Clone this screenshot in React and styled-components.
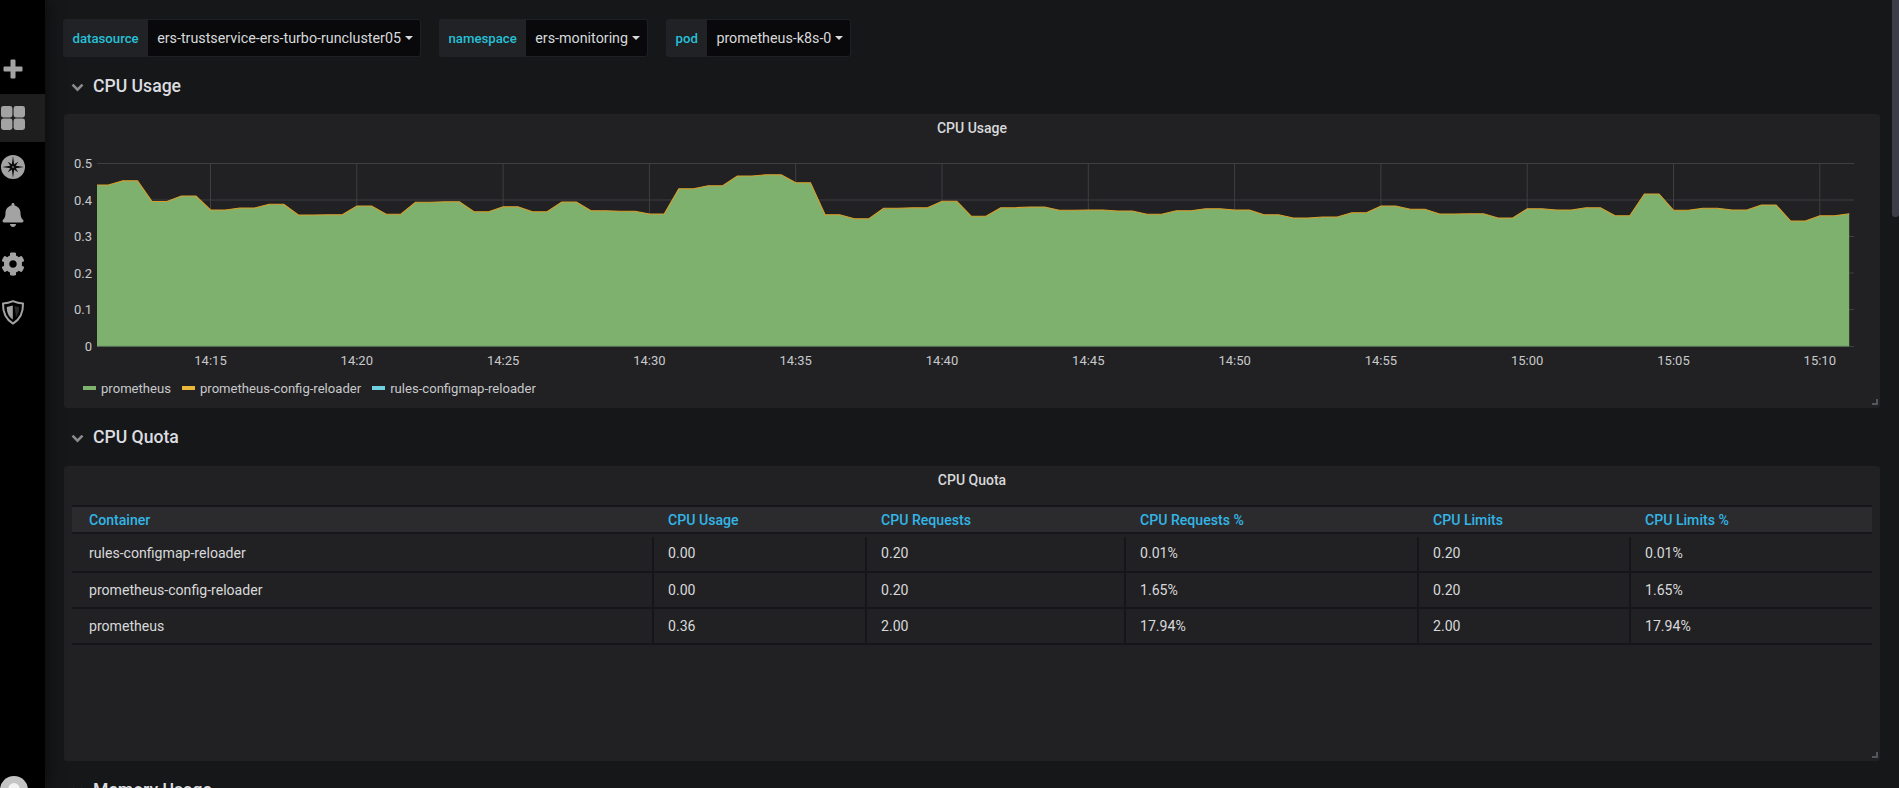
import React from 'react';
import styled, { createGlobalStyle } from 'styled-components';
import { FaBell, FaCog } from 'react-icons/fa';

const GlobalStyle = createGlobalStyle`
  html, body {
    margin: 0;
    height: 788px;
    overflow: hidden;
    background: #161719;
    font-family: Roboto, "Liberation Sans", sans-serif;
    color: #d8d9da;
  }
`;

const Page = styled.div`
  display: flex;
  height: 788px;
  overflow: hidden;
`;

const Sidebar = styled.nav`
  position: relative;
  z-index: 2;
  flex: 0 0 45px;
  display: flex;
  flex-direction: column;
  padding-top: 45px;
  box-sizing: border-box;
  background: #000;
  box-shadow: 0 0 18px rgba(0, 0, 0, 0.65);
  overflow: hidden;
`;

const SideItem = styled.div`
  flex: 0 0 48.7px;
  display: flex;
  align-items: center;
  justify-content: center;
  padding-right: 19px;
  box-sizing: border-box;
  color: #a3a3a3;
  background: ${(p) => (p.$active ? '#1e1e1f' : 'transparent')};
`;

const Avatar = styled.div`
  flex: 0 0 28px;
  width: 28px;
  margin-top: auto;
  margin-bottom: -16px;
  border-radius: 50%;
  background: #c4c4c4;
  display: flex;
  justify-content: center;
  padding-top: 7px;
  box-sizing: border-box;
  &::after {
    content: '';
    width: 12px;
    height: 14px;
    border-radius: 50%;
    background: #f2f2f2;
  }
`;

const Main = styled.main`
  flex: 1;
  min-width: 0;
  padding: 19px 19px 0;
`;

const VarRow = styled.div`
  display: flex;
  gap: 18px;
  margin-left: -1px;
`;

const VarGroup = styled.div`
  display: flex;
  height: 38px;
  font-size: 14.3px;
`;

const VarLabel = styled.div`
  display: flex;
  align-items: center;
  padding: 0 9.5px;
  background: #202226;
  color: #27c0d6;
  font-size: 13.2px;
  font-weight: 500;
  border-radius: 3px 0 0 3px;
`;

const VarSelect = styled.div`
  display: flex;
  align-items: center;
  gap: 4px;
  padding: 0 7px 0 9px;
  background: #09090b;
  border: 1px solid #1f2024;
  border-left: 0;
  border-radius: 0 3px 3px 0;
  color: #d8d9da;
`;

const Caret = styled.span`
  width: 0;
  height: 0;
  border-left: 4.5px solid transparent;
  border-right: 4.5px solid transparent;
  border-top: 4.5px solid #d8d9da;
`;

const SectionRow = styled.div`
  display: flex;
  align-items: center;
  gap: 9px;
  height: ${(p) => p.$height}px;
  padding-left: 7px;
  font-size: 17.6px;
  font-weight: 500;
  color: #dcdde0;
  svg {
    margin-top: 3px;
  }
`;

const Panel = styled.section`
  position: relative;
  height: ${(p) => p.$height}px;
  background: #212124;
  border-radius: 3px;
  &::after {
    content: '';
    position: absolute;
    right: 2px;
    bottom: 3px;
    width: 4px;
    height: 4px;
    border-right: 2px solid #55565a;
    border-bottom: 2px solid #55565a;
  }
`;

const PanelTitle = styled.h3`
  margin: 0;
  height: 28px;
  line-height: 28px;
  text-align: center;
  font-size: 14px;
  font-weight: 500;
  color: #d8d9da;
`;

const ChartSvg = styled.svg`
  display: block;
  width: 1816px;
  height: 230px;
`;

const AxisLabel = styled.text`
  font-size: 13px;
  fill: #c8c9ca;
`;

const Legend = styled.div`
  display: flex;
  gap: 11px;
  height: 32px;
  align-items: center;
  padding-left: 19px;
  font-size: 13.1px;
  color: #c8c9ca;
`;

const LegendItem = styled.div`
  display: flex;
  align-items: center;
  gap: 5px;
  &::before {
    content: '';
    width: 13px;
    height: 4px;
    background: ${(p) => p.$color};
  }
`;

const TableWrap = styled.div`
  margin: 11px 8px 0;
  font-size: 14.1px;
`;

const COLUMNS = '580px 213px 259px 293px 212px 243px';

const HeadRow = styled.div`
  display: grid;
  grid-template-columns: ${COLUMNS};
  height: 25px;
  align-items: center;
  background: #2b2b2e;
  border-top: 2px solid #141619;
  border-bottom: 2px solid #141619;
  margin-bottom: 3px;
`;

const HeadCell = styled.div`
  padding-left: ${(p) => (p.$first ? 17 : 16)}px;
  color: #33b5e5;
  font-weight: 500;
`;

const Row = styled.div`
  display: grid;
  grid-template-columns: ${COLUMNS};
  height: 36px;
  box-sizing: border-box;
  border-bottom: 2px solid #141619;
  &:nth-child(2) > div {
    padding-bottom: 2px;
  }
`;

const Cell = styled.div`
  display: flex;
  align-items: center;
  box-sizing: border-box;
  padding-left: ${(p) => (p.$first ? 17 : 14)}px;
  border-left: ${(p) => (p.$first ? 'none' : '2px solid #141619')};
  color: #d8d9da;
`;

const ScrollThumb = styled.div`
  position: fixed;
  top: 0;
  right: 0;
  width: 7px;
  height: 217px;
  background: #3c3d48;
  border-radius: 0 0 3px 3px;
`;

const PlusIcon = () => (
  <svg width="20" height="20" viewBox="0 0 20 20" fill="currentColor">
    <path d="M7.5 1.5a1 1 0 0 1 1-1h3a1 1 0 0 1 1 1v6h6a1 1 0 0 1 1 1v3a1 1 0 0 1-1 1h-6v6a1 1 0 0 1-1 1h-3a1 1 0 0 1-1-1v-6h-6a1 1 0 0 1-1-1v-3a1 1 0 0 1 1-1h6z" />
  </svg>
);

const DashIcon = () => (
  <svg width="24" height="24" viewBox="0 0 24 24" fill="currentColor">
    <rect x="0" y="0" width="11.4" height="11.4" rx="2.4" />
    <rect x="12.6" y="0" width="11.4" height="11.4" rx="2.4" />
    <rect x="0" y="12.6" width="11.4" height="11.4" rx="2.4" />
    <rect x="12.6" y="12.6" width="11.4" height="11.4" rx="2.4" />
  </svg>
);

// compass rose: long N/E/S/W tips, short diagonal tips, narrow waist between them
const starPoints = Array.from({ length: 16 }, (_, i) => {
  const radius = i % 4 === 0 ? 11 : i % 4 === 2 ? 7.4 : 3;
  const angle = (i * Math.PI) / 8 - Math.PI / 2;
  return `${(12 + radius * Math.cos(angle)).toFixed(2)},${(12 + radius * Math.sin(angle)).toFixed(2)}`;
}).join(' ');

const CompassIcon = () => (
  <svg width="24" height="24" viewBox="0 0 24 24">
    <circle cx="12" cy="12" r="12" fill="currentColor" />
    <polygon fill="#0c0c0c" points={starPoints} />
    <circle cx="12" cy="12" r="1.1" fill="#6a6a6a" />
  </svg>
);

const ShieldIcon = () => (
  <svg width="24" height="25" viewBox="0 0 24 25" fill="none">
    <path
      d="M12 1.2c3.2 1.4 6.6 2.2 10 2.4.2 8.6-2.6 15.8-10 20-7.4-4.2-10.2-11.4-10-20 3.4-.2 6.8-1 10-2.4z"
      stroke="currentColor"
      strokeWidth="2"
      strokeLinejoin="round"
    />
    <path d="M11.8 5.4v14.2C8 17 5.6 12.6 5.8 7z" fill="currentColor" />
    <path d="M13.4 6l4.8 1.2c0 4-1.2 7.6-3.2 10z" fill="#2a2a2a" />
  </svg>
);

const Chevron = () => (
  <svg width="13" height="9" viewBox="0 0 13 9" fill="none">
    <path d="M1.5 1.6l5 5 5-5" stroke="#8a8b8d" strokeWidth="2.6" />
  </svg>
);

// plateau heights read off the panel, in page px; each holds for two samples
const LEVELS = [
  185, 180.7, 201.5, 196, 210, 208, 204.3, 215, 214.7, 206, 214.3, 202.3, 201.8, 211.7, 206.7,
  211.7, 202, 210.7, 211.3, 214, 188.7, 185.7, 176, 174.7, 182.7, 214.7, 218.7, 208.3, 207.8,
  201.3, 216.3, 207.7, 207, 210.3, 210, 211, 214.3, 210.7, 208.7, 210, 214.7, 218, 217, 212.7,
  206, 209.3, 214, 213.8, 218, 208.7, 210, 207.7, 215.7, 194, 210.3, 208.3, 210, 205, 221, 215.7,
];

const STEP = 14.63;
const FIRST_X = 93.6;
const BASE_Y = 346;

const linePoints = [];
LEVELS.forEach((y, k) => {
  const x0 = FIRST_X + 2 * k * STEP;
  linePoints.push([Math.max(x0, 97), y]);
  linePoints.push([x0 + STEP, y]);
});
linePoints.push([FIRST_X + 120 * STEP, 213.7]);

const toPoints = (pts) => pts.map(([x, y]) => `${x.toFixed(1)},${y.toFixed(1)}`).join(' ');
const lastX = linePoints[linePoints.length - 1][0];

const yTicks = [
  ['0.5', 163],
  ['0.4', 199.5],
  ['0.3', 236],
  ['0.2', 272.5],
  ['0.1', 309],
  ['0', 346],
];

const xTicks = ['14:15', '14:20', '14:25', '14:30', '14:35', '14:40', '14:45', '14:50', '14:55', '15:00', '15:05', '15:10'];

const CpuChart = () => (
  <ChartSvg viewBox="64 142 1816 230">
    {yTicks.map(([label, y]) => (
      <g key={label}>
        <line x1="97" x2="1854" y1={y + 0.5} y2={y + 0.5} stroke="#3f3f42" />
        <AxisLabel x="92" y={y + 5} textAnchor="end">
          {label}
        </AxisLabel>
      </g>
    ))}
    {xTicks.map((label, i) => {
      const x = 210.5 + i * 146.3;
      return (
        <g key={label}>
          <line x1={x} x2={x} y1="163" y2="346" stroke="#3f3f42" />
          <AxisLabel x={x} y="365" textAnchor="middle">
            {label}
          </AxisLabel>
        </g>
      );
    })}
    <polygon points={`97,${BASE_Y} ${toPoints(linePoints)} ${lastX},${BASE_Y}`} fill="#7fb16e" />
    <polyline points={toPoints(linePoints)} fill="none" stroke="#d9a02a" strokeWidth="1.1" />
    <line x1="97" x2={lastX} y1={BASE_Y} y2={BASE_Y} stroke="#6f9a62" />
  </ChartSvg>
);

const variables = [
  ['datasource', 'ers-trustservice-ers-turbo-runcluster05'],
  ['namespace', 'ers-monitoring'],
  ['pod', 'prometheus-k8s-0'],
];

const legend = [
  ['prometheus', '#7eb26d'],
  ['prometheus-config-reloader', '#eab839'],
  ['rules-configmap-reloader', '#6ed0e0'],
];

const quotaHead = ['Container', 'CPU Usage', 'CPU Requests', 'CPU Requests %', 'CPU Limits', 'CPU Limits %'];

const quotaRows = [
  ['rules-configmap-reloader', '0.00', '0.20', '0.01%', '0.20', '0.01%'],
  ['prometheus-config-reloader', '0.00', '0.20', '1.65%', '0.20', '1.65%'],
  ['prometheus', '0.36', '2.00', '17.94%', '2.00', '17.94%'],
];

const App = () => (
  <Page>
    <GlobalStyle />
    <Sidebar>
      <SideItem><PlusIcon /></SideItem>
      <SideItem $active><DashIcon /></SideItem>
      <SideItem><CompassIcon /></SideItem>
      <SideItem><FaBell size={24} /></SideItem>
      <SideItem><FaCog size={24} /></SideItem>
      <SideItem><ShieldIcon /></SideItem>
      <Avatar />
    </Sidebar>
    <Main>
      <VarRow>
        {variables.map(([name, value]) => (
          <VarGroup key={name}>
            <VarLabel>{name}</VarLabel>
            <VarSelect>
              {value}
              <Caret />
            </VarSelect>
          </VarGroup>
        ))}
      </VarRow>

      <SectionRow $height={57}>
        <Chevron />
        CPU Usage
      </SectionRow>
      <Panel $height={294}>
        <PanelTitle>CPU Usage</PanelTitle>
        <CpuChart />
        <Legend>
          {legend.map(([name, color]) => (
            <LegendItem key={name} $color={color}>{name}</LegendItem>
          ))}
        </Legend>
      </Panel>

      <SectionRow $height={58}>
        <Chevron />
        CPU Quota
      </SectionRow>
      <Panel $height={295}>
        <PanelTitle>CPU Quota</PanelTitle>
        <TableWrap>
          <HeadRow>
            {quotaHead.map((title, i) => (
              <HeadCell key={title} $first={i === 0}>{title}</HeadCell>
            ))}
          </HeadRow>
          {quotaRows.map((row) => (
            <Row key={row[0]}>
              {row.map((value, i) => (
                <Cell key={i} $first={i === 0}>{value}</Cell>
              ))}
            </Row>
          ))}
        </TableWrap>
      </Panel>

      <SectionRow $height={57}>
        <Chevron />
        Memory Usage
      </SectionRow>
    </Main>
    <ScrollThumb />
  </Page>
);

export default App;
